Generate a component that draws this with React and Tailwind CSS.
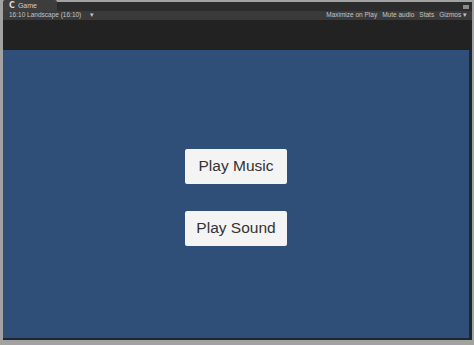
import React from 'react'

const ToolbarItem = ({ children }) => (
  <span className="text-[6.5px] leading-none text-[#c4c4c4] font-['Liberation_Sans',sans-serif]">{children}</span>
)

const App = () => {
  return (
    <div className="w-[474px] h-[345px] bg-[#a2a2a2] pl-[3px] pr-[2px] flex flex-col font-['DejaVu_Sans',sans-serif]">
      {/* tab strip */}
      <div className="h-[11px] flex items-end bg-[#a2a2a2]">
        <div className="h-[11px] w-[54px] bg-[#3d3d3d] rounded-t-[2px] flex items-center gap-[3px] pl-[6px]">
          <span className="text-[8px] leading-none text-[#dcdcdc] font-bold">C</span>
          <span className="text-[7px] leading-none text-[#cfcfcf] font-['Liberation_Sans',sans-serif]">Game</span>
        </div>
        <div className="flex-1 h-[9px] bg-[#2c2c2c] flex justify-end items-center pr-[3px]">
          <div className="w-[6px] h-[4px] bg-[#8a8a8a]" />
        </div>
      </div>

      {/* toolbar */}
      <div className="h-[9px] bg-[#3a3a3a] flex items-center justify-between pl-[6px] pr-[5px]">
        <div className="flex items-center gap-[9px]">
          <ToolbarItem>16:10 Landscape (16:10)</ToolbarItem>
          <ToolbarItem>▾</ToolbarItem>
        </div>
        <div className="flex items-center gap-[5px]">
          <ToolbarItem>Maximize on Play</ToolbarItem>
          <ToolbarItem>Mute audio</ToolbarItem>
          <ToolbarItem>Stats</ToolbarItem>
          <ToolbarItem>Gizmos ▾</ToolbarItem>
        </div>
      </div>

      {/* letterbox */}
      <div className="h-[30px] bg-[#222222]" />

      {/* game view */}
      <div className="h-[290px] bg-[#2f4e78] border-r-[3px] border-b-[2px] border-[#1e2630] flex flex-col items-center justify-center gap-[27px] pt-[6px]">
        <button className="w-[102px] h-[35px] bg-[#f4f4f4] rounded-[2px] text-[15.5px] text-[#333333] font-['Liberation_Sans',sans-serif]">
          Play Music
        </button>
        <button className="w-[102px] h-[35px] bg-[#f4f4f4] rounded-[2px] text-[15.5px] text-[#333333] font-['Liberation_Sans',sans-serif]">
          Play Sound
        </button>
      </div>
    </div>
  )
}

export default App
